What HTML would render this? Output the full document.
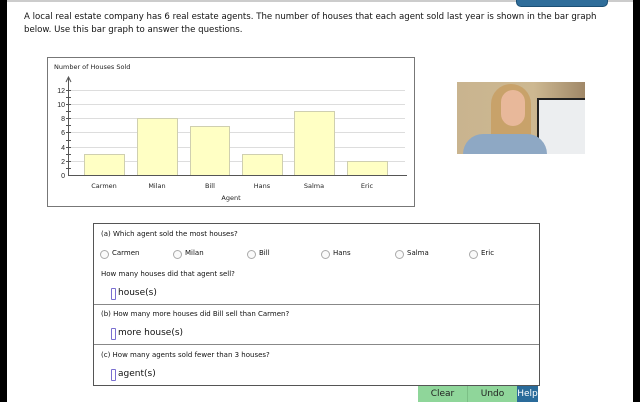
<!DOCTYPE html><html><head><style>
body{margin:0;width:640px;height:402px;overflow:hidden;background:#000;font-family:"DejaVu Sans","Liberation Sans",sans-serif;position:relative}
.page{position:absolute;left:7px;top:0;width:626px;height:402px;background:#fff}
.t{position:absolute;font-size:8px;color:#111;white-space:nowrap}
.sm{font-size:7px}
.rad{position:absolute;width:7px;height:7px;border:1px solid #aaa;border-radius:50%;background:#fafafa}
.inp{position:absolute;width:3px;height:10px;border:1px solid #7a6fd0;border-radius:1px}
.btn{position:absolute;top:386px;height:16px;font-size:9px;text-align:center;line-height:16px;color:#222}
</style></head><body>
<div class="page"></div>
<div style="position:absolute;left:7px;top:0;width:626px;height:2px;background:#ccc"></div>
<div style="position:absolute;left:516px;top:-6px;width:90px;height:11px;background:#2f6d9a;border-radius:5px;border:1px solid #1b4f75"></div>
<div class="t" style="left:24px;top:12px;font-size:8.6px">A local real estate company has 6 real estate agents. The number of houses that each agent sold last year is shown in the bar graph</div>
<div class="t" style="left:24px;top:25px;font-size:8.6px">below. Use this bar graph to answer the questions.</div>
<div style="position:absolute;left:47px;top:57px;width:366px;height:148px;border:1px solid #777;background:#fff"></div>
<svg style="position:absolute;left:0;top:0" width="640" height="402">
<g stroke="#ddd" stroke-width="1">
<line x1="68" y1="90.5" x2="405" y2="90.5"/><line x1="68" y1="104.5" x2="405" y2="104.5"/><line x1="68" y1="118.5" x2="405" y2="118.5"/><line x1="68" y1="132.5" x2="405" y2="132.5"/><line x1="68" y1="147.5" x2="405" y2="147.5"/><line x1="68" y1="161.5" x2="405" y2="161.5"/></g>
<g fill="#ffffc4" stroke="#cfcfb0" stroke-width="1">
<rect x="84.5" y="154.5" width="40" height="21"/><rect x="137.5" y="118.5" width="40" height="57"/><rect x="190.5" y="126.5" width="39" height="49"/><rect x="242.5" y="154.5" width="40" height="21"/><rect x="294.5" y="111.5" width="40" height="64"/><rect x="347.5" y="161.5" width="40" height="14"/></g>
<g stroke="#555" stroke-width="1" fill="none">
<line x1="68.5" y1="78" x2="68.5" y2="176"/><line x1="68" y1="175.5" x2="407" y2="175.5"/>
<path d="M66 82 L68.5 77 L71 82"/>
<path d="M66 90.5h5M66 97.5h5M66 104.5h5M66 111.5h5M66 118.5h5M66 125.5h5M66 132.5h5M66 140.5h5M66 147.5h5M66 154.5h5M66 161.5h5M66 168.5h5"/></g>
<g font-family="Liberation Sans" font-size="7" fill="#222" text-anchor="end">
<text x="65" y="93">12</text><text x="65" y="107">10</text><text x="65" y="121">8</text><text x="65" y="135">6</text><text x="65" y="150">4</text><text x="65" y="164">2</text><text x="65" y="178">0</text></g>
<g font-family="DejaVu Sans" font-size="6.5" fill="#222" text-anchor="middle">
<text x="104" y="188">Carmen</text><text x="157" y="188">Milan</text><text x="210" y="188">Bill</text><text x="262" y="188">Hans</text><text x="314" y="188">Salma</text><text x="367" y="188">Eric</text><text x="231" y="200">Agent</text>
<text x="54" y="69" text-anchor="start">Number of Houses Sold</text></g>
</svg>
<div style="position:absolute;left:457px;top:82px;width:128px;height:72px;background:linear-gradient(90deg,#c9b48f 0%,#cdb891 60%,#a08868 100%);overflow:hidden">
<div style="position:absolute;left:80px;top:16px;width:46px;height:56px;background:#eceef0;border:2px solid #222;border-bottom:none"></div>
<div style="position:absolute;left:34px;top:2px;width:40px;height:70px;background:#c8a26a;border-radius:20px 20px 0 0"></div>
<div style="position:absolute;left:44px;top:8px;width:24px;height:36px;background:#e8b89a;border-radius:12px"></div>
<div style="position:absolute;left:6px;top:52px;width:84px;height:22px;background:#8ea8c4;border-radius:20px 20px 0 0"></div>
</div>
<div style="position:absolute;left:93px;top:223px;width:445px;height:161px;border:1px solid #555;background:#fff"></div>
<div style="position:absolute;left:94px;top:304px;width:445px;height:1px;background:#888"></div>
<div style="position:absolute;left:94px;top:344px;width:445px;height:1px;background:#888"></div>
<div class="t sm" style="left:101px;top:230px">(a) Which agent sold the most houses?</div>
<div class="rad" style="left:100px;top:250px"></div><div class="t sm" style="left:112px;top:249px">Carmen</div>
<div class="rad" style="left:173px;top:250px"></div><div class="t sm" style="left:185px;top:249px">Milan</div>
<div class="rad" style="left:247px;top:250px"></div><div class="t sm" style="left:259px;top:249px">Bill</div>
<div class="rad" style="left:321px;top:250px"></div><div class="t sm" style="left:333px;top:249px">Hans</div>
<div class="rad" style="left:395px;top:250px"></div><div class="t sm" style="left:407px;top:249px">Salma</div>
<div class="rad" style="left:469px;top:250px"></div><div class="t sm" style="left:481px;top:249px">Eric</div>
<div class="t sm" style="left:101px;top:270px">How many houses did that agent sell?</div>
<div class="inp" style="left:111px;top:288px"></div><div class="t" style="left:118px;top:288px;font-size:9px">house(s)</div>
<div class="t sm" style="left:101px;top:310px">(b) How many more houses did Bill sell than Carmen?</div>
<div class="inp" style="left:111px;top:328px"></div><div class="t" style="left:118px;top:328px;font-size:9px">more house(s)</div>
<div class="t sm" style="left:101px;top:351px">(c) How many agents sold fewer than 3 houses?</div>
<div class="inp" style="left:111px;top:369px"></div><div class="t" style="left:118px;top:369px;font-size:9px">agent(s)</div>
<div class="btn" style="left:418px;width:49px;background:#8fd69a;border-right:1px solid #7cbf86">Clear</div>
<div class="btn" style="left:468px;width:49px;background:#8fd69a">Undo</div>
<div class="btn" style="left:517px;width:21px;background:#2a6b9a;color:#fff">Help</div>
</body></html>
